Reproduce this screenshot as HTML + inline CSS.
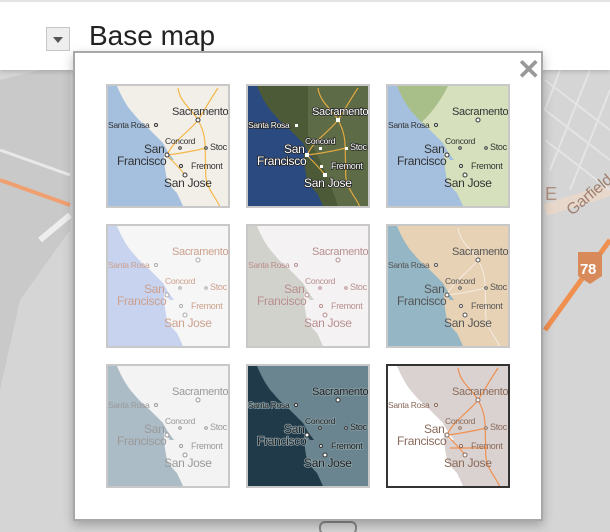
<!DOCTYPE html>
<html><head><meta charset="utf-8"><style>
*{margin:0;padding:0;box-sizing:border-box}
body{width:610px;height:532px;overflow:hidden;background:#d6d6d6;font-family:"Liberation Sans",sans-serif;position:relative}
.top{position:absolute;left:0;top:0;width:610px;height:70px;background:#fff;border-top:2px solid #e4e4e4;box-shadow:0 2px 4px rgba(0,0,0,.15)}
.dd{position:absolute;left:46px;top:25px;width:24px;height:24px;background:#eee;border:1px solid #c6c6c6}
.dd:after{content:"";position:absolute;left:6px;top:9px;border-left:5px solid transparent;border-right:5px solid transparent;border-top:6px solid #555}
.title{position:absolute;left:89px;top:18px;font-size:28px;color:#222}
.pop{position:absolute;left:73px;top:51px;width:470px;height:470px;background:#fff;border:2px solid #a8a8a8;box-shadow:0 4px 10px rgba(0,0,0,.25)}
.x{position:absolute;left:442px;top:0px;font-size:28px;color:#999;font-weight:bold}
.t{position:absolute;width:124px;height:124px;border:2px solid #c8c8c8;overflow:hidden}
.t svg{display:block}
.t svg g{transform:translateY(2px)}
.sel{border-color:#333}
svg text{font-family:"Liberation Sans",sans-serif;letter-spacing:-0.3px}
</style></head><body>
<svg width="610" height="532" style="position:absolute;left:0;top:0">
<rect width="610" height="532" fill="#d5d5d5"/>
<path d="M0,80 L40,70 L70,60 L70,230 L20,300 L0,390 Z" fill="#c9c9c9"/>
<path d="M0,150 L70,175" stroke="#e8e8e8" stroke-width="3"/>
<path d="M0,180 L70,205" stroke="#f0a070" stroke-width="4"/>
<path d="M40,240 L70,215" stroke="#eee" stroke-width="6"/>
<path d="M545,330 L610,240" stroke="#f09050" stroke-width="5"/>
<path d="M545,210 L610,190" stroke="#e8d8cc" stroke-width="12"/>
<g stroke="#e4e4e4" stroke-width="2"><path d="M545,80 L610,130 M545,110 L610,160 M545,140 L610,190 M560,70 L545,110 M590,70 L550,170 M610,90 L570,190"/></g>
<path d="M578,252 L602,252 L602,276 L590,284 L578,276 Z" fill="#d88a5a"/>
<text x="580" y="274" font-size="15" fill="#fff" font-weight="bold">78</text>
<text x="572" y="216" font-size="16" fill="#a08070" transform="rotate(-40 572 216)" font-family="Liberation Sans">Garfield A</text>
<text x="545" y="200" font-size="18" fill="#b09080">E</text>
<rect x="320" y="522" width="36" height="12" rx="5" fill="none" stroke="#888" stroke-width="2"/>
</svg>
<div class="top"><div class="dd"></div><div class="title">Base map</div></div>
<div class="pop"><div class="x">✕</div>

<div class="t" style="left:31px;top:31px"><svg width="120" height="120"><rect width="120" height="120" fill="#f2efe9"/><path d="M0,0 L9,0 C14,12 20,22 25,27 C32,36 38,40 42,44 L55,57 L60,66 L66,74 L62,74 L56,66 C56,80 58,88 59,94 C62,100 66,104 69,107 L75,120 L0,120 Z" fill="#a4c0de"/><g fill="none" stroke="#f5b84a" stroke-width="1.2"><path d="M70,0 C72,15 85,22 90,32 C80,45 66,52 59,67 M90,32 C100,50 96,60 98,80 C95,100 110,110 112,120 M59,67 C66,75 72,80 77,87 M59,67 C70,66 90,62 98,60 M110,0 C100,15 95,25 90,32"/></g><g fill="#333"><text x="64" y="27" font-size="11">Sacramento</text><text x="0" y="40" font-size="8.5">Santa Rosa</text><text x="57" y="56" font-size="8.5">Concord</text><text x="102" y="62" font-size="9">Stoc</text><text x="36" y="65" font-size="12">San</text><text x="9" y="77" font-size="12">Francisco</text><text x="83" y="81" font-size="9">Fremont</text><text x="56" y="99" font-size="12">San Jose</text></g><g fill="#fff" stroke="#333" stroke-width="1"><circle cx="90" cy="32" r="2"/><circle cx="48" cy="37" r="1.5"/><circle cx="72" cy="60" r="1.3"/><circle cx="98" cy="60" r="1.3"/><circle cx="59" cy="67" r="2"/><circle cx="73" cy="78" r="1.5"/><circle cx="77" cy="87" r="2"/></g></svg></div>

<div class="t" style="left:171px;top:31px"><svg width="120" height="120"><rect width="120" height="120" fill="#4c5a38"/><path d="M60,0 L120,0 L120,120 L90,120 C80,90 70,70 60,50 Z" fill="#5d6b46"/><path d="M0,0 L9,0 C14,12 20,22 25,27 C32,36 38,40 42,44 L55,57 L60,66 L66,74 L62,74 L56,66 C56,80 58,88 59,94 C62,100 66,104 69,107 L75,120 L0,120 Z" fill="#2b4a80"/><g fill="none" stroke="#e0a840" stroke-width="1.2"><path d="M70,0 C72,15 85,22 90,32 C80,45 66,52 59,67 M90,32 C100,50 96,60 98,80 C95,100 110,110 112,120 M59,67 C66,75 72,80 77,87 M59,67 C70,66 90,62 98,60 M110,0 C100,15 95,25 90,32"/></g><g fill="#fff" stroke="#222" stroke-width="1.5" paint-order="stroke"><text x="64" y="27" font-size="11">Sacramento</text><text x="0" y="40" font-size="8.5">Santa Rosa</text><text x="57" y="56" font-size="8.5">Concord</text><text x="102" y="62" font-size="9">Stoc</text><text x="36" y="65" font-size="12">San</text><text x="9" y="77" font-size="12">Francisco</text><text x="83" y="81" font-size="9">Fremont</text><text x="56" y="99" font-size="12">San Jose</text></g><g fill="#fff"><rect x="88" y="30" width="4" height="4"/><rect x="47" y="36" width="3" height="3"/><rect x="71" y="59" width="3" height="3"/><rect x="97" y="59" width="3" height="3"/><rect x="57" y="65" width="4" height="4"/><rect x="72" y="77" width="3" height="3"/><rect x="75" y="85" width="4" height="4"/></g></svg></div>

<div class="t" style="left:311px;top:31px"><svg width="120" height="120"><rect width="120" height="120" fill="#d6e0bc"/><path d="M0,0 L60,0 C50,20 40,30 30,40 Z" fill="#a9bf8a"/><path d="M0,0 L9,0 C14,12 20,22 25,27 C32,36 38,40 42,44 L55,57 L60,66 L66,74 L62,74 L56,66 C56,80 58,88 59,94 C62,100 66,104 69,107 L75,120 L0,120 Z" fill="#a4c0de"/><g fill="#333"><text x="64" y="27" font-size="11">Sacramento</text><text x="0" y="40" font-size="8.5">Santa Rosa</text><text x="57" y="56" font-size="8.5">Concord</text><text x="102" y="62" font-size="9">Stoc</text><text x="36" y="65" font-size="12">San</text><text x="9" y="77" font-size="12">Francisco</text><text x="83" y="81" font-size="9">Fremont</text><text x="56" y="99" font-size="12">San Jose</text></g><g fill="#fff" stroke="#333" stroke-width="1"><circle cx="90" cy="32" r="2"/><circle cx="48" cy="37" r="1.5"/><circle cx="72" cy="60" r="1.3"/><circle cx="98" cy="60" r="1.3"/><circle cx="59" cy="67" r="2"/><circle cx="73" cy="78" r="1.5"/><circle cx="77" cy="87" r="2"/></g></svg></div>

<div class="t" style="left:31px;top:171px"><svg width="120" height="120"><rect width="120" height="120" fill="#f6f6f6"/><path d="M0,0 L9,0 C14,12 20,22 25,27 C32,36 38,40 42,44 L55,57 L60,66 L66,74 L62,74 L56,66 C56,80 58,88 59,94 C62,100 66,104 69,107 L75,120 L0,120 Z" fill="#c8d3ef"/><g fill="#cca08c"><text x="64" y="27" font-size="11">Sacramento</text><text x="0" y="40" font-size="8.5">Santa Rosa</text><text x="57" y="56" font-size="8.5">Concord</text><text x="102" y="62" font-size="9">Stoc</text><text x="36" y="65" font-size="12">San</text><text x="9" y="77" font-size="12">Francisco</text><text x="83" y="81" font-size="9">Fremont</text><text x="56" y="99" font-size="12">San Jose</text></g><g fill="#fff" stroke="#aaa" stroke-width="1"><circle cx="90" cy="32" r="2"/><circle cx="48" cy="37" r="1.5"/><circle cx="72" cy="60" r="1.3"/><circle cx="98" cy="60" r="1.3"/><circle cx="59" cy="67" r="2"/><circle cx="73" cy="78" r="1.5"/><circle cx="77" cy="87" r="2"/></g></svg></div>

<div class="t" style="left:171px;top:171px"><svg width="120" height="120"><rect width="120" height="120" fill="#f4f2f3"/><path d="M0,0 L9,0 C14,12 20,22 25,27 C32,36 38,40 42,44 L55,57 L60,66 L66,74 L62,74 L56,66 C56,80 58,88 59,94 C62,100 66,104 69,107 L75,120 L0,120 Z" fill="#d2d2cc"/><g fill="#b88e8e"><text x="64" y="27" font-size="11">Sacramento</text><text x="0" y="40" font-size="8.5">Santa Rosa</text><text x="57" y="56" font-size="8.5">Concord</text><text x="102" y="62" font-size="9">Stoc</text><text x="36" y="65" font-size="12">San</text><text x="9" y="77" font-size="12">Francisco</text><text x="83" y="81" font-size="9">Fremont</text><text x="56" y="99" font-size="12">San Jose</text></g><g fill="#fff" stroke="#b88e8e" stroke-width="1"><circle cx="90" cy="32" r="2"/><circle cx="48" cy="37" r="1.5"/><circle cx="72" cy="60" r="1.3"/><circle cx="98" cy="60" r="1.3"/><circle cx="59" cy="67" r="2"/><circle cx="73" cy="78" r="1.5"/><circle cx="77" cy="87" r="2"/></g></svg></div>

<div class="t" style="left:311px;top:171px"><svg width="120" height="120"><rect width="120" height="120" fill="#e8d2b6"/><path d="M0,0 L9,0 C14,12 20,22 25,27 C32,36 38,40 42,44 L55,57 L60,66 L66,74 L62,74 L56,66 C56,80 58,88 59,94 C62,100 66,104 69,107 L75,120 L0,120 Z" fill="#94b6c5"/><g fill="none" stroke="#f4ece2" stroke-width="1"><path d="M70,0 C72,15 85,22 90,32 C80,45 66,52 59,67 M90,32 C100,50 96,60 98,80 C95,100 110,110 112,120 M59,67 C70,66 90,62 98,60"/></g><g fill="#555"><text x="64" y="27" font-size="11">Sacramento</text><text x="0" y="40" font-size="8.5">Santa Rosa</text><text x="57" y="56" font-size="8.5">Concord</text><text x="102" y="62" font-size="9">Stoc</text><text x="36" y="65" font-size="12">San</text><text x="9" y="77" font-size="12">Francisco</text><text x="83" y="81" font-size="9">Fremont</text><text x="56" y="99" font-size="12">San Jose</text></g><g fill="#fff" stroke="#555" stroke-width="1"><circle cx="90" cy="32" r="2"/><circle cx="48" cy="37" r="1.5"/><circle cx="72" cy="60" r="1.3"/><circle cx="98" cy="60" r="1.3"/><circle cx="59" cy="67" r="2"/><circle cx="73" cy="78" r="1.5"/><circle cx="77" cy="87" r="2"/></g></svg></div>

<div class="t" style="left:31px;top:311px"><svg width="120" height="120"><rect width="120" height="120" fill="#f3f3f3"/><path d="M0,0 L9,0 C14,12 20,22 25,27 C32,36 38,40 42,44 L55,57 L60,66 L66,74 L62,74 L56,66 C56,80 58,88 59,94 C62,100 66,104 69,107 L75,120 L0,120 Z" fill="#acbcc6"/><g fill="#999"><text x="64" y="27" font-size="11">Sacramento</text><text x="0" y="40" font-size="8.5">Santa Rosa</text><text x="57" y="56" font-size="8.5">Concord</text><text x="102" y="62" font-size="9">Stoc</text><text x="36" y="65" font-size="12">San</text><text x="9" y="77" font-size="12">Francisco</text><text x="83" y="81" font-size="9">Fremont</text><text x="56" y="99" font-size="12">San Jose</text></g><g fill="#fff" stroke="#999" stroke-width="1"><circle cx="90" cy="32" r="2"/><circle cx="48" cy="37" r="1.5"/><circle cx="72" cy="60" r="1.3"/><circle cx="98" cy="60" r="1.3"/><circle cx="59" cy="67" r="2"/><circle cx="73" cy="78" r="1.5"/><circle cx="77" cy="87" r="2"/></g></svg></div>

<div class="t" style="left:171px;top:311px"><svg width="120" height="120"><rect width="120" height="120" fill="#6a858f"/><path d="M0,0 L9,0 C14,12 20,22 25,27 C32,36 38,40 42,44 L55,57 L60,66 L66,74 L62,74 L56,66 C56,80 58,88 59,94 C62,100 66,104 69,107 L75,120 L0,120 Z" fill="#213a4a"/><g fill="#222" stroke="#8aa0a8" stroke-width="1.5" paint-order="stroke"><text x="64" y="27" font-size="11">Sacramento</text><text x="0" y="40" font-size="8.5">Santa Rosa</text><text x="57" y="56" font-size="8.5">Concord</text><text x="102" y="62" font-size="9">Stoc</text><text x="36" y="65" font-size="12">San</text><text x="9" y="77" font-size="12">Francisco</text><text x="83" y="81" font-size="9">Fremont</text><text x="56" y="99" font-size="12">San Jose</text></g><g fill="#fff" stroke="#333" stroke-width="1"><circle cx="90" cy="32" r="2"/><circle cx="48" cy="37" r="1.5"/><circle cx="72" cy="60" r="1.3"/><circle cx="98" cy="60" r="1.3"/><circle cx="59" cy="67" r="2"/><circle cx="73" cy="78" r="1.5"/><circle cx="77" cy="87" r="2"/></g></svg></div>

<div class="t sel" style="left:311px;top:311px"><svg width="120" height="120"><rect width="120" height="120" fill="#d9d2d0"/><path d="M0,0 L9,0 C14,12 20,22 25,27 C32,36 38,40 42,44 L55,57 L60,66 L66,74 L62,74 L56,66 C56,80 58,88 59,94 C62,100 66,104 69,107 L75,120 L0,120 Z" fill="#fff"/><g fill="none" stroke="#f09050" stroke-width="1.2"><path d="M70,0 C72,15 85,22 90,32 C80,45 66,52 59,67 M90,32 C100,50 96,60 98,80 C95,100 110,110 112,120 M59,67 C66,75 72,80 77,87 M59,67 C70,66 90,62 98,60 M110,0 C100,15 95,25 90,32 M62,80 L100,80"/></g><g fill="#8a6a5a"><text x="64" y="27" font-size="11">Sacramento</text><text x="0" y="40" font-size="8.5">Santa Rosa</text><text x="57" y="56" font-size="8.5">Concord</text><text x="102" y="62" font-size="9">Stoc</text><text x="36" y="65" font-size="12">San</text><text x="9" y="77" font-size="12">Francisco</text><text x="83" y="81" font-size="9">Fremont</text><text x="56" y="99" font-size="12">San Jose</text></g><g fill="#fff" stroke="#8a6a5a" stroke-width="1"><circle cx="90" cy="32" r="2"/><circle cx="48" cy="37" r="1.5"/><circle cx="72" cy="60" r="1.3"/><circle cx="98" cy="60" r="1.3"/><circle cx="59" cy="67" r="2"/><circle cx="73" cy="78" r="1.5"/><circle cx="77" cy="87" r="2"/></g></svg></div>

</div>
</body></html>
